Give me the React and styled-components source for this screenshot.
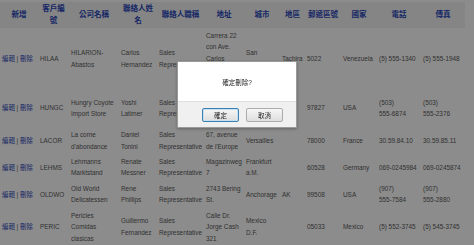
import { createGlobalStyle, styled } from 'styled-components';

const GlobalStyle = createGlobalStyle`
  html, body {
    margin: 0;
    padding: 0;
    background: #ffffff;
    font-family: "Liberation Sans", "Noto Sans CJK TC", sans-serif;
  }
`;

const columns = [
  { title: '新增', width: 38 },
  { title: '客戶編號', width: 31 },
  { title: '公司名稱', width: 50 },
  { title: '聯絡人姓名', width: 38 },
  { title: '聯絡人職稱', width: 47 },
  { title: '地址', width: 40 },
  { title: '城市', width: 36 },
  { title: '地區', width: 25 },
  { title: '郵遞區號', width: 36 },
  { title: '國家', width: 36 },
  { title: '電話', width: 44 },
  { title: '傳真', width: 44 },
];

const customers = [
  ['HILAA', 'HILARION-Abastos', 'Carlos Hernandez', 'Sales Representative', 'Carrera 22 con Ave. Carlos Soublette #8-35', 'San Cristobal', 'Tachira', '5022', 'Venezuela', '(5) 555-1340', '(5) 555-1948'],
  ['HUNGC', 'Hungry Coyote Import Store', 'Yoshi Latimer', 'Sales Representative', 'City Center Plaza 516 Main St.', 'Elgin', 'OR', '97827', 'USA', '(503) 555-6874', '(503) 555-2376'],
  ['LACOR', "La corne d'abondance", 'Daniel Tonini', 'Sales Representative', "67, avenue de l'Europe", 'Versailles', '', '78000', 'France', '30.59.84.10', '30.59.85.11'],
  ['LEHMS', 'Lehmanns Marktstand', 'Renate Messner', 'Sales Representative', 'Magazinweg 7', 'Frankfurt a.M.', '', '60528', 'Germany', '069-0245984', '069-0245874'],
  ['OLDWO', 'Old World Delicatessen', 'Rene Phillips', 'Sales Representative', '2743 Bering St.', 'Anchorage', 'AK', '99508', 'USA', '(907) 555-7584', '(907) 555-2880'],
  ['PERIC', 'Pericles Comidas clasicas', 'Guillermo Fernandez', 'Sales Representative', 'Calle Dr. Jorge Cash 321', 'Mexico D.F.', '', '05033', 'Mexico', '(5) 552-3745', '(5) 545-3745'],
];

// phone numbers only break at spaces, never after the hyphen
const phoneColumns = [9, 10];

function Phone({ value }) {
  const words = value.split(' ');
  return words.map((word, i) => (
    <span key={i}>
      <Word>{word}</Word>
      {i < words.length - 1 ? ' ' : ''}
    </span>
  ));
}

function App() {
  return (
    <>
      <GlobalStyle />
      <Grid>
        <colgroup>
          {columns.map((col) => (
            <col key={col.title} style={{ width: col.width }} />
          ))}
        </colgroup>
        <thead>
          <tr>
            {columns.map((col) => (
              <HeadCell key={col.title}>{col.title}</HeadCell>
            ))}
          </tr>
        </thead>
        <tbody>
          {customers.map((row) => (
            <tr key={row[0]}>
              <Cell>
                <Action href="#">編輯</Action> | <Action href="#">刪除</Action>
              </Cell>
              {row.map((value, i) => (
                <Cell key={i}>
                  {phoneColumns.includes(i) ? <Phone value={value} /> : value}
                </Cell>
              ))}
            </tr>
          ))}
        </tbody>
      </Grid>

      <Overlay>
        <Dialog>
          <Message>確定刪除?</Message>
          <Footer>
            <DialogButton $focused>確定</DialogButton>
            <DialogButton>取消</DialogButton>
          </Footer>
        </Dialog>
      </Overlay>
    </>
  );
}

const Grid = styled.table`
  table-layout: fixed;
  width: 465px;
  margin-top: 2px;
  border-collapse: collapse;
  color: #5a5a5a;
`;

const HeadCell = styled.th`
  padding: 1px 2px;
  background: #f2f2f2;
  color: #2b48b8;
  font-size: 7.5px;
  font-weight: bold;
  line-height: 12px;
  text-align: center;
  vertical-align: middle;
`;

const Cell = styled.td`
  padding: 2px;
  font-size: 6.4px;
  line-height: 11.4px;
  text-align: left;
  vertical-align: middle;
`;

const Word = styled.span`
  white-space: nowrap;
`;

const Action = styled.a`
  color: #2b48b8;
  text-decoration: none;
`;

const Overlay = styled.div`
  position: fixed;
  inset: 0;
  background: rgba(0, 0, 0, 0.45);
  display: flex;
  justify-content: center;
  align-items: flex-start;
  padding-top: 61px;
`;

const Dialog = styled.div`
  width: 120px;
  height: 67px;
  box-sizing: border-box;
  display: flex;
  flex-direction: column;
  background: #ffffff;
  border: 1px solid #9a9a9a;
  box-shadow: 0 1px 3px rgba(0, 0, 0, 0.3);
`;

const Message = styled.div`
  flex: 1;
  display: flex;
  align-items: center;
  justify-content: center;
  font-size: 6.5px;
  color: #222;
`;

const Footer = styled.div`
  height: 25px;
  display: flex;
  align-items: center;
  justify-content: flex-end;
  gap: 7px;
  padding: 0 13px;
  background: #f0f0f0;
  border-top: 1px solid #dfdfdf;
`;

const DialogButton = styled.button`
  width: 37px;
  height: 14px;
  padding: 0;
  font-family: inherit;
  font-size: 6.5px;
  color: #222;
  background: linear-gradient(#f6f6f6, #dedede);
  border: 1px solid ${(p) => (p.$focused ? '#3c7fb1' : '#acacac')};
  border-radius: 2px;
  box-shadow: ${(p) => (p.$focused ? 'inset 0 0 0 1px #c6e0f3' : 'none')};
`;

export default App;
